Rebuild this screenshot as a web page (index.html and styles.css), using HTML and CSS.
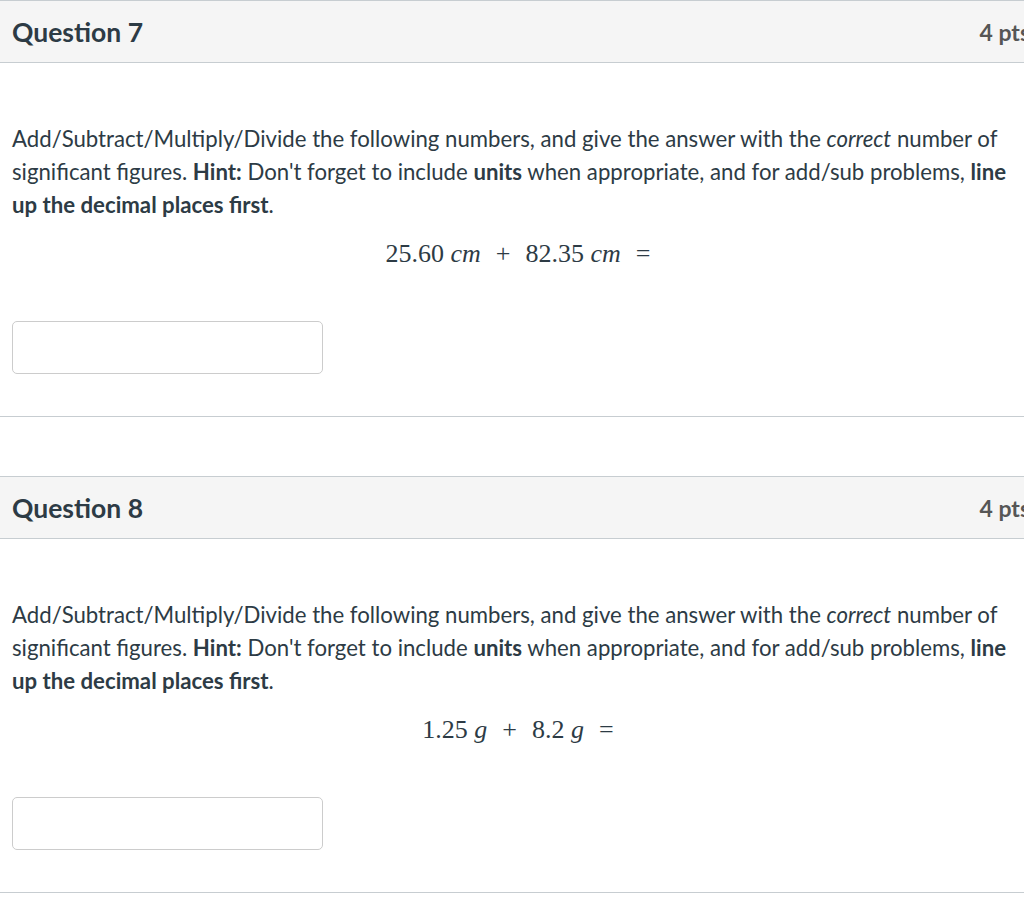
FILE: index.html
```html
<!DOCTYPE html>
<html lang="en">
<head>
    <meta charset="UTF-8">
    <meta name="viewport" content="width=device-width, initial-scale=1.0">
    <title>Quiz</title>
    <link rel="stylesheet" href="styles.css">
</head>
<body>

<div class="quiz">
    <!-- Question 7 -->
    <div class="question">
        <div class="question-header">
            <h2 class="question-name">Question 7</h2>
            <span class="question-points">4 pts</span>
        </div>
        <div class="question-body">
            <p class="question-text">Add/Subtract/Multiply/Divide the following numbers, and give the answer with the <em>correct</em> number of significant figures. <strong>Hint:</strong> Don't forget to include <strong>units</strong> when appropriate, and for add/sub problems, <strong>line up the decimal places first</strong>.</p>
            <div class="equation">25.60 <i>cm</i><span class="op">+</span>82.35 <i>cm</i><span class="op op-end">=</span></div>
            <input type="text" class="answer">
        </div>
    </div>

    <!-- Question 8 -->
    <div class="question">
        <div class="question-header">
            <h2 class="question-name">Question 8</h2>
            <span class="question-points">4 pts</span>
        </div>
        <div class="question-body">
            <p class="question-text">Add/Subtract/Multiply/Divide the following numbers, and give the answer with the <em>correct</em> number of significant figures. <strong>Hint:</strong> Don't forget to include <strong>units</strong> when appropriate, and for add/sub problems, <strong>line up the decimal places first</strong>.</p>
            <div class="equation">1.25 <i>g</i><span class="op">+</span>8.2 <i>g</i><span class="op op-end">=</span></div>
            <input type="text" class="answer">
        </div>
    </div>
</div>

</body>
</html>
```

FILE: styles.css
```css
html, body {
    margin: 0;
    padding: 0;
    overflow: hidden;
}
body {
    font-family: Lato, "Open Sans", sans-serif;
    color: #2d3b45;
    background-color: #fff;
}
.quiz {
    width: 1036px;
}
.question {
    border-top: 1px solid #c7cdd1;
    border-bottom: 1px solid #c7cdd1;
    margin-bottom: 59px;
}
.question-header {
    display: flex;
    justify-content: space-between;
    align-items: center;
    height: 61px;
    padding: 0 6px 0 12px;
    background-color: #f5f5f5;
    border-bottom: 1px solid #c7cdd1;
}
.question-name {
    margin: 0;
    font-size: 26.5px;
    font-weight: bold;
}
.question-points {
    font-size: 23px;
    font-weight: bold;
    color: #565656;
}
.question-body {
    padding: 59px 12px 42px;
}
.question-text {
    margin: 0;
    font-size: 22.2px;
    line-height: 33px;
}
.question-text strong {
    font-weight: bold;
}
.equation {
    margin: 17px 0 0;
    text-align: center;
    font-family: "Liberation Serif", "Times New Roman", serif;
    font-size: 26px;
    line-height: 32px;
}
.equation i {
    font-style: italic;
}
.op {
    margin: 0 15px;
}
.op-end {
    margin-right: 0;
}
.answer {
    display: block;
    box-sizing: border-box;
    width: 311px;
    height: 53px;
    margin-top: 51px;
    border: 1px solid #ccc;
    border-radius: 5px;
    background: #fff;
}
```
